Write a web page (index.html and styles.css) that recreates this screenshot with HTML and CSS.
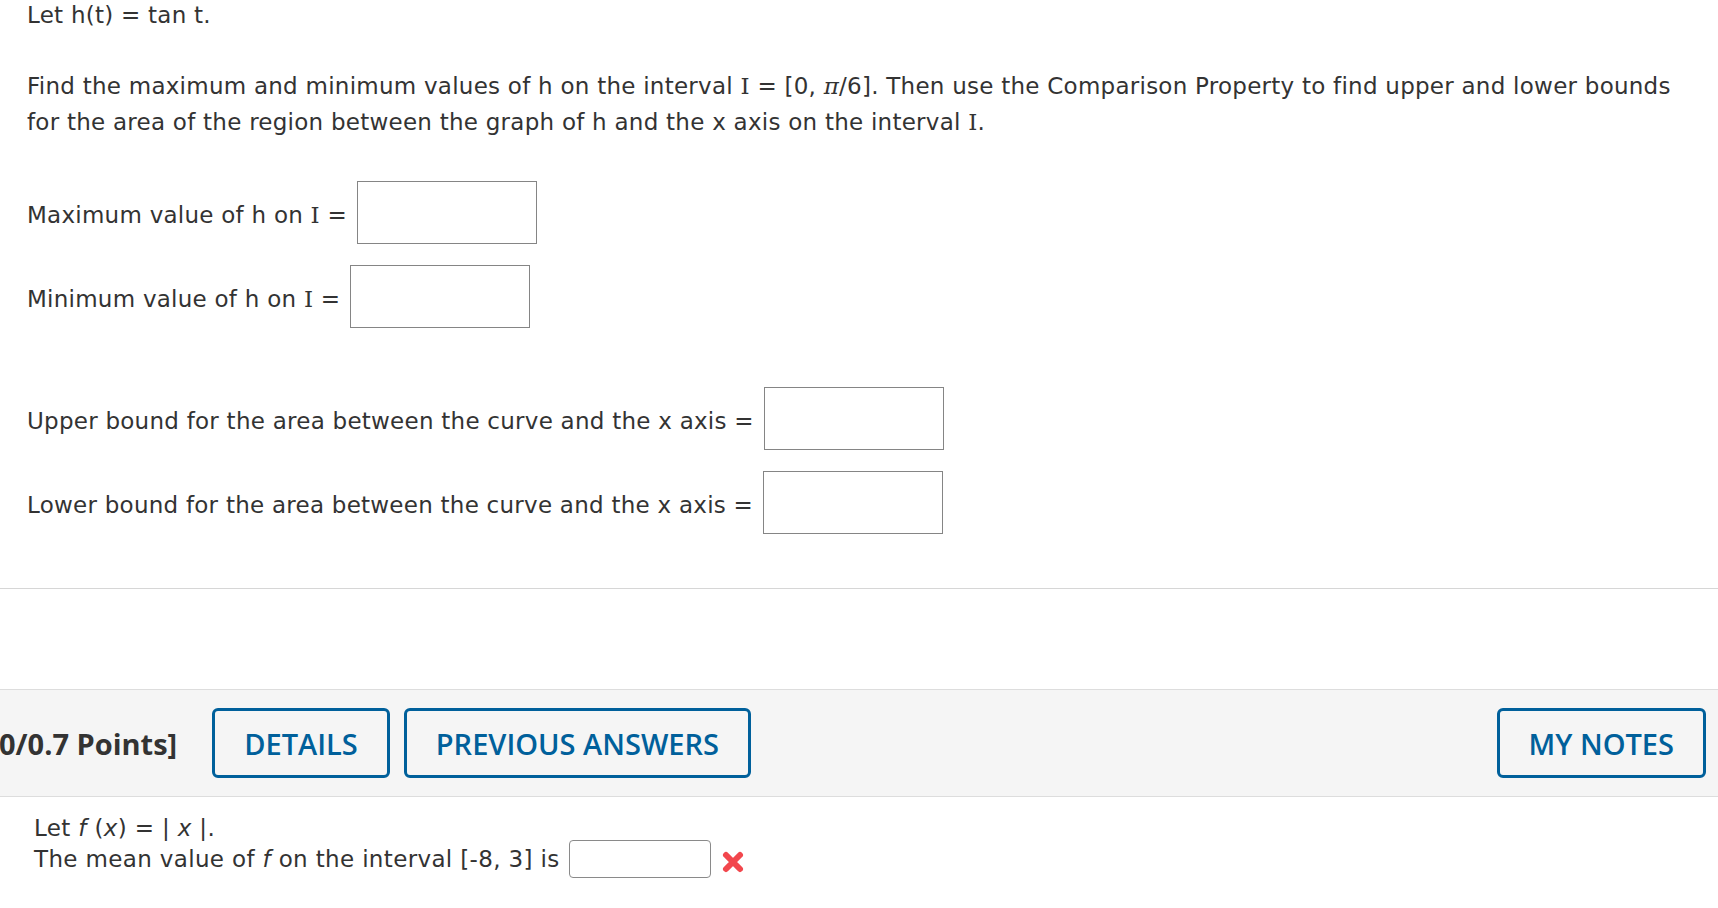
FILE: index.html
```html
<!DOCTYPE html>
<html>
<head>
<meta charset="utf-8">
<title>Question</title>
<link rel="stylesheet" href="styles.css">
</head>
<body>
<section class="q1">
  <p class="intro">Let h(t) = tan t.</p>
  <p class="task">Find the maximum and minimum values of h on the interval <span class="mi">I</span> = [0, <i class="pi">π</i>/6]. Then use the Comparison Property to find upper and lower bounds for the area of the region between the graph of h and the x axis on the interval <span class="mi">I</span>.</p>
  <div class="row r-max"><span class="lbl">Maximum value of h on <span class="mi">I</span> =</span><span class="box"></span></div>
  <div class="row r-min"><span class="lbl">Minimum value of h on <span class="mi">I</span> =</span><span class="box"></span></div>
  <div class="row r-up"><span class="lbl">Upper bound for the area between the curve and the x axis =</span><span class="box"></span></div>
  <div class="row r-low"><span class="lbl">Lower bound for the area between the curve and the x axis =</span><span class="box"></span></div>
</section>
<div class="sep"></div>
<div class="bar">
  <span class="points">0/0.7 Points]</span>
  <button class="btn">DETAILS</button>
  <button class="btn">PREVIOUS ANSWERS</button>
  <button class="btn notes">MY NOTES</button>
</div>
<section class="q2">
  <div class="l1">Let <i>f</i> (<i>x</i>) = | <i>x</i> |.</div>
  <div class="l2"><span>The mean value of <i>f</i> on the interval [-8, 3] is</span><span class="box2"></span><svg class="wrong" width="26" height="26" viewBox="0 0 26 26"><path d="M6 6 L20 20 M20 6 L6 20" stroke="#f2474d" stroke-width="6" stroke-linecap="round"/></svg></div>
</section>
</body>
</html>
```
FILE: styles.css
```css
html, body {
  margin: 0;
  padding: 0;
  background: #ffffff;
}
body {
  width: 1718px;
  overflow: hidden;
  font-family: "DejaVu Sans", Verdana, sans-serif;
  color: #333333;
}
.q1 {
  padding-left: 27px;
  font-size: 23px;
  letter-spacing: 0.25px;
}
.intro {
  margin: -3px 0 0 0;
  line-height: 36px;
}
.task {
  margin: 35px 0 0 0;
  line-height: 36px;
  max-width: 1665px;
}
.mi {
  font-family: "DejaVu Serif", serif;
}
.pi {
  font-family: "DejaVu Serif", serif;
}
.row {
  display: flex;
  align-items: center;
  height: 63px;
}
.lbl {
  padding-top: 5px;
}
.r-max { margin-top: 41px; }
.r-min { margin-top: 21px; }
.r-up { margin-top: 59px; }
.r-low { margin-top: 21px; }
.box {
  width: 178px;
  height: 61px;
  border: 1px solid #858585;
  margin-left: 10px;
  background: #fff;
}
.sep {
  margin-top: 54px;
  border-top: 1px solid #d6d6d6;
}
.bar {
  margin-top: 100px;
  display: flex;
  align-items: center;
  background: #f5f5f5;
  border-top: 1px solid #dddddd;
  border-bottom: 1px solid #dddddd;
  padding: 18px 12px 18px 0;
}
.points {
  font-family: "Open Sans", sans-serif;
  font-weight: 700;
  font-size: 29px;
  color: #333333;
  margin-left: -1px;
  margin-right: 35px;
}
.btn {
  height: 70px;
  padding: 0 29px;
  border: 3px solid #00609b;
  border-radius: 6px;
  background: transparent;
  color: #00609b;
  font-family: "Open Sans", sans-serif;
  font-weight: 600;
  font-size: 29px;
  margin-right: 14px;
}
.notes {
  margin-left: auto;
  margin-right: 0;
}
.q2 {
  padding: 19px 0 0 34px;
  font-size: 23px;
  letter-spacing: 0.35px;
}
.l1 {
  line-height: 24px;
}
.l2 {
  display: flex;
  align-items: center;
  height: 38px;
}
.box2 {
  width: 140px;
  height: 36px;
  border: 1px solid #8a8a8a;
  border-radius: 4px;
  margin-left: 9px;
  background: #fff;
}
.wrong {
  margin-left: 9px;
  margin-top: 6px;
}
```
